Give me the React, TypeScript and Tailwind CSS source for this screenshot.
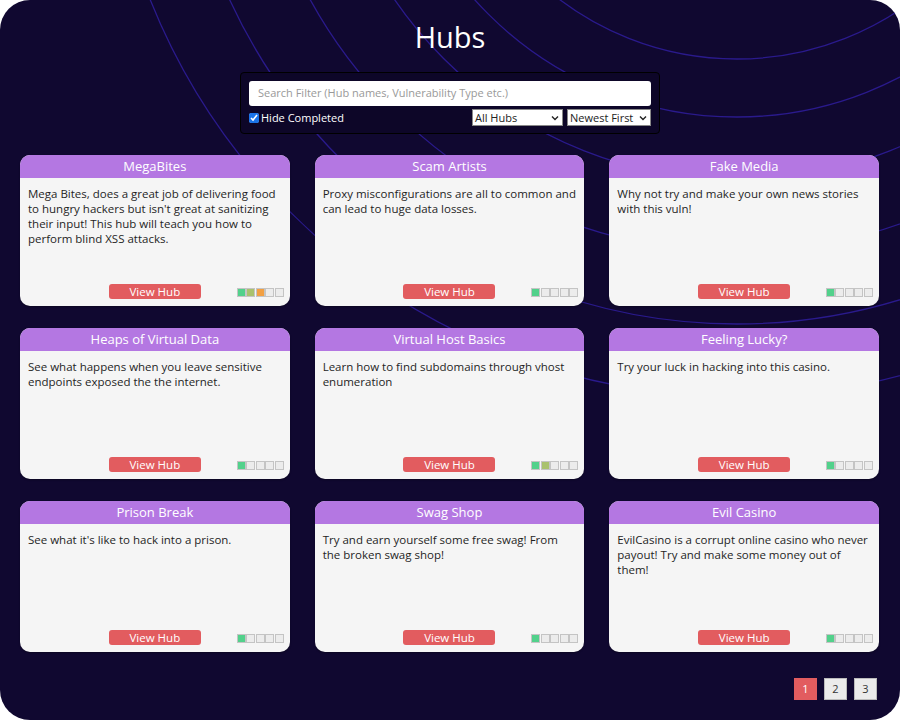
import React from "react";

type Hub = { title: string; desc: string; progress: string[] };

const G = "#52d18b";
const O = "#a9c26e";
const R = "#f2a043";
const E = "";

const hubs: Hub[] = [
  {
    title: "MegaBites",
    desc: "Mega Bites, does a great job of delivering food to hungry hackers but isn't great at sanitizing their input! This hub will teach you how to perform blind XSS attacks.",
    progress: [G, O, R, E, E],
  },
  {
    title: "Scam Artists",
    desc: "Proxy misconfigurations are all to common and can lead to huge data losses.",
    progress: [G, E, E, E, E],
  },
  {
    title: "Fake Media",
    desc: "Why not try and make your own news stories with this vuln!",
    progress: [G, E, E, E, E],
  },
  {
    title: "Heaps of Virtual Data",
    desc: "See what happens when you leave sensitive endpoints exposed the the internet.",
    progress: [G, E, E, E, E],
  },
  {
    title: "Virtual Host Basics",
    desc: "Learn how to find subdomains through vhost enumeration",
    progress: [G, O, E, E, E],
  },
  {
    title: "Feeling Lucky?",
    desc: "Try your luck in hacking into this casino.",
    progress: [G, E, E, E, E],
  },
  {
    title: "Prison Break",
    desc: "See what it's like to hack into a prison.",
    progress: [G, E, E, E, E],
  },
  {
    title: "Swag Shop",
    desc: "Try and earn yourself some free swag! From the broken swag shop!",
    progress: [G, E, E, E, E],
  },
  {
    title: "Evil Casino",
    desc: "EvilCasino is a corrupt online casino who never payout! Try and make some money out of them!",
    progress: [G, E, E, E, E],
  },
];

function Background() {
  const radii = [170, 232, 294, 352, 415, 487, 559, 632];
  return (
    <svg
      className="absolute inset-0 pointer-events-none"
      width="900"
      height="720"
      viewBox="0 0 900 720"
    >
      {radii.map((r) => (
        <circle key={r} cx="737" cy="-235" r={r} fill="none" stroke="#2a1a8c" strokeWidth="1.3" />
      ))}
    </svg>
  );
}

function Card({ hub }: { hub: Hub }) {
  return (
    <div className="flex flex-col h-[151px] rounded-[10px] overflow-hidden bg-[#f5f5f5] shadow-[0_1px_2px_rgba(0,0,0,0.3)]">
      <div className="h-[23px] bg-[#b477e2] text-white text-[13px] leading-[23px] text-center">
        {hub.title}
      </div>
      <div className="flex-1 px-[8px] pt-[8px] text-[11.5px] leading-[15px] text-[#1f1f1f]">
        {hub.desc}
      </div>
      <div className="relative h-[22px] flex items-start justify-center">
        <div className="w-[92px] h-[15px] rounded-[3px] bg-[#e25c5f] text-white text-[11.5px] leading-[15px] text-center">
          View Hub
        </div>
        <div className="absolute right-[6px] top-[4px] flex gap-[0.5px]">
          {hub.progress.map((c, i) => (
            <div
              key={i}
              className="w-[9px] h-[9px] border border-[#c4c4c4]"
              style={{ backgroundColor: c || "#ececec" }}
            />
          ))}
        </div>
      </div>
    </div>
  );
}

function Select({ label, w }: { label: string; w: string }) {
  return (
    <div
      className={`${w} h-[17px] bg-white border border-[#888] flex items-center justify-between pl-[2px] pr-[3px] text-[11px] text-[#222]`}
    >
      <span>{label}</span>
      <svg width="8" height="6" viewBox="0 0 8 6">
        <path d="M1 1.5 L4 4.5 L7 1.5" fill="none" stroke="#222" strokeWidth="1.4" />
      </svg>
    </div>
  );
}

export default function App() {
  return (
    <div className="w-[900px] h-[720px] bg-white" style={{ fontFamily: '"Open Sans", "Noto Sans", sans-serif' }}>
      <div className="relative w-[900px] h-[720px] rounded-[30px] bg-[#100830] overflow-hidden">
        <Background />
        <div className="relative flex flex-col items-center">
          <h1 className="mt-[19px] text-white text-[29px] leading-[36px]">Hubs</h1>
          <div className="mt-[17px] w-[420px] h-[62px] rounded-[4px] border border-black bg-[#0d0628] px-[8px] pt-[8px]">
            <div className="h-[25px] rounded-[3px] bg-white flex items-center px-[9px] text-[11px] text-[#999]">
              Search Filter (Hub names, Vulnerability Type etc.)
            </div>
            <div className="mt-[3px] flex items-center justify-between">
              <label className="flex items-center gap-[2px] text-white text-[11px] mt-[1px]">
                <input type="checkbox" defaultChecked className="w-[10px] h-[10px] m-0 accent-[#1a73e8]" />
                <span>Hide Completed</span>
              </label>
              <div className="flex gap-[4px]">
                <Select label="All Hubs" w="w-[91px]" />
                <Select label="Newest First" w="w-[84px]" />
              </div>
            </div>
          </div>
        </div>
        <div className="relative mt-[21px] pl-[20px] pr-[21px] grid grid-cols-3 gap-x-[25px] gap-y-[22px]">
          {hubs.map((h) => (
            <Card key={h.title} hub={h} />
          ))}
        </div>
        <div className="relative mt-[26px] pr-[23px] flex justify-end gap-[7px]">
          <div className="w-[23px] h-[22px] bg-[#e25c5f] text-white text-[11px] flex items-center justify-center border border-[#e25c5f]">
            1
          </div>
          <div className="w-[23px] h-[22px] bg-[#ebebeb] text-[#333] text-[11px] flex items-center justify-center border border-[#bbb]">
            2
          </div>
          <div className="w-[23px] h-[22px] bg-[#ebebeb] text-[#333] text-[11px] flex items-center justify-center border border-[#bbb]">
            3
          </div>
        </div>
      </div>
    </div>
  );
}
